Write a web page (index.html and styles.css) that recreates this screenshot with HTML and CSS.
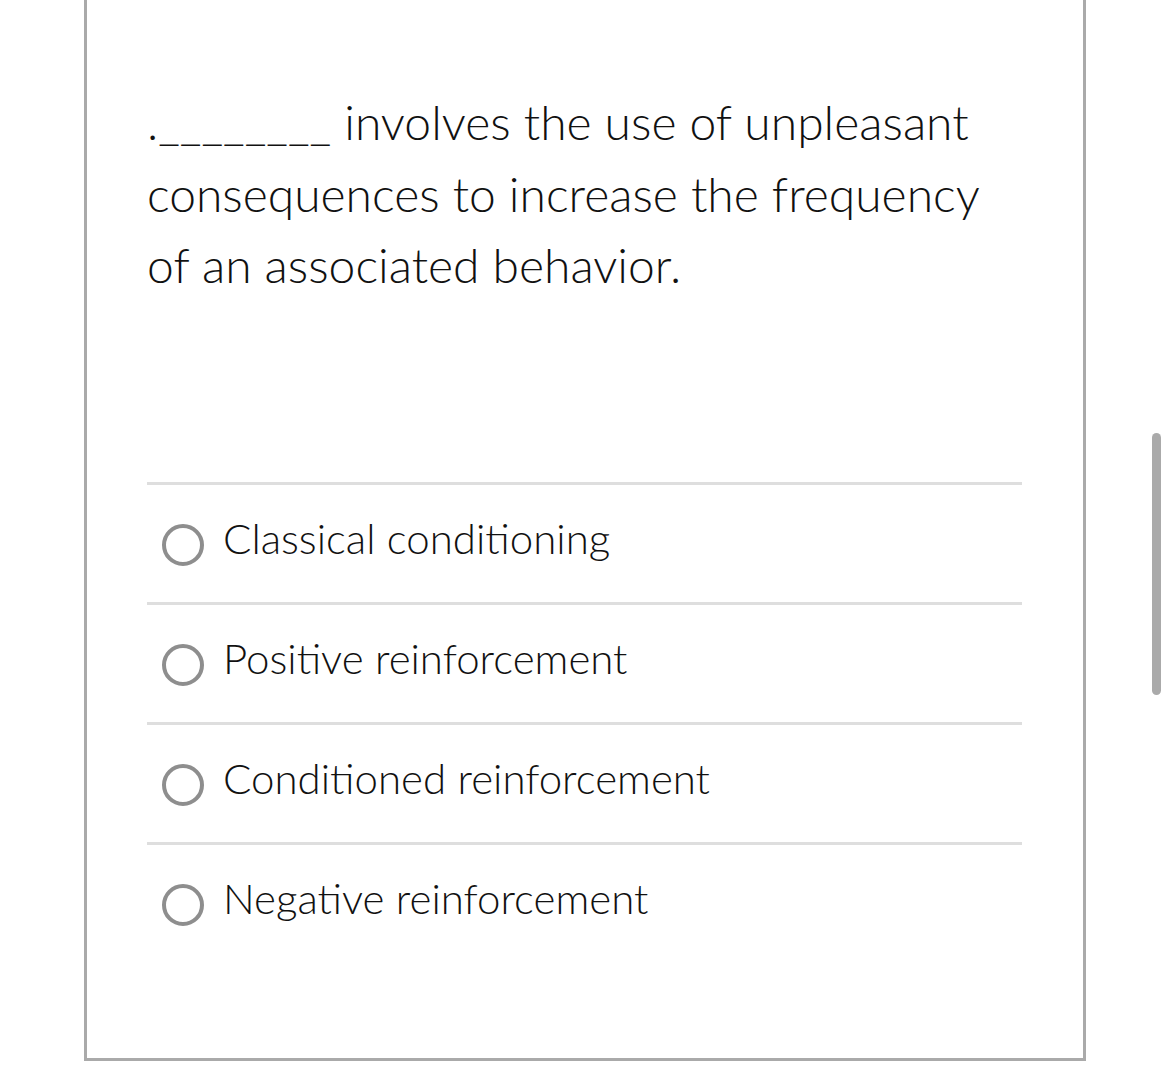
FILE: index.html
```html
<!DOCTYPE html>
<html lang="en">
<head>
<meta charset="utf-8">
<title>Question</title>
<link rel="stylesheet" href="styles.css">
</head>
<body>
<div class="card">
  <p class="question">.________ involves the use of unpleasant consequences to increase the frequency of an associated behavior.</p>
  <ul class="options">
    <li class="option"><span class="radio"></span><span class="label">Classical conditioning</span></li>
    <li class="option"><span class="radio"></span><span class="label">Positive reinforcement</span></li>
    <li class="option"><span class="radio"></span><span class="label">Conditioned reinforcement</span></li>
    <li class="option"><span class="radio"></span><span class="label">Negative reinforcement</span></li>
  </ul>
</div>
<div class="scrollbar"></div>
</body>
</html>
```
FILE: styles.css
```css
html, body {
  margin: 0;
  padding: 0;
  background: #fff;
}
body {
  font-family: Lato, "Open Sans", sans-serif;
  font-weight: 300;
  color: #111111;
  height: 1071px;
  overflow: hidden;
}
.card {
  box-sizing: border-box;
  margin-left: 84px;
  width: 1002px;
  height: 1061px;
  border: 3px solid #aaaaaa;
  border-top: none;
  padding: 86px 61px 0 60px;
}
.question {
  margin: 0;
  font-size: 48px;
  line-height: 71.5px;
  max-width: 870px;
}
.options {
  list-style: none;
  margin: 181px 0 0 0;
  padding: 0;
}
.option {
  display: flex;
  align-items: center;
  height: 117px;
  border-top: 3px solid #dedede;
}
.radio {
  box-sizing: border-box;
  width: 42px;
  height: 42px;
  border: 4px solid #8e8e8e;
  border-radius: 50%;
  margin-left: 15px;
  margin-right: 19px;
  margin-top: 3px;
  flex: none;
}
.label {
  font-size: 42px;
  line-height: 1;
  margin-top: -11px;
}
.scrollbar {
  position: fixed;
  left: 1152px;
  top: 433px;
  width: 9px;
  height: 262px;
  border-radius: 5px;
  background: #aaaaaa;
}
```
